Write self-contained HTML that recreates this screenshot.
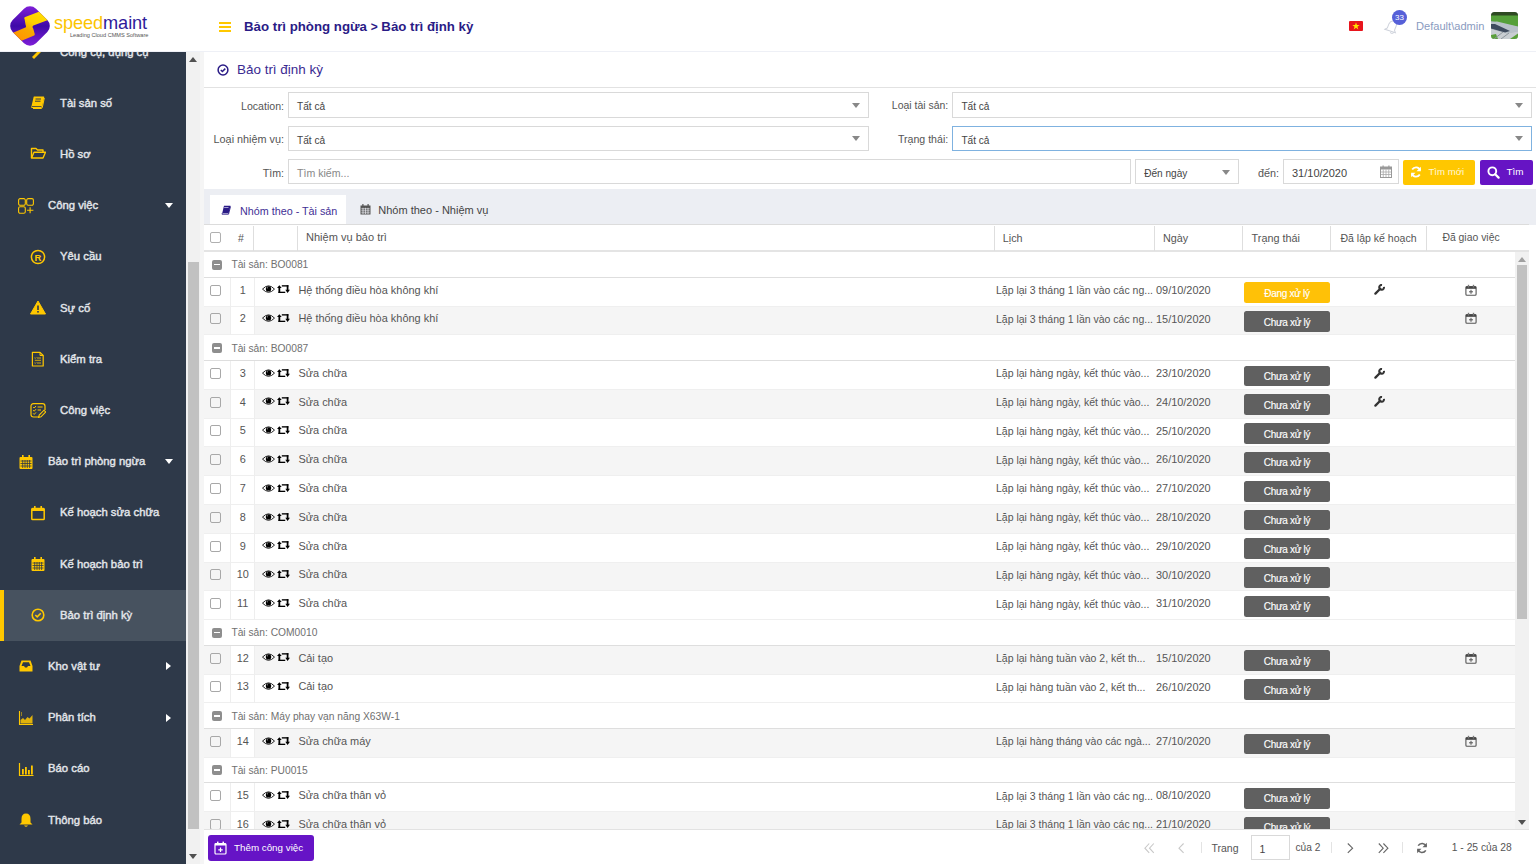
<!DOCTYPE html>
<html><head><meta charset="utf-8"><title>Bảo trì định kỳ</title>
<style>
*{box-sizing:border-box;margin:0;padding:0}
html,body{width:1536px;height:864px;overflow:hidden}
body{position:relative;font-family:"Liberation Sans", sans-serif;background:#fff}
.a{position:absolute}
.t{position:absolute;white-space:nowrap;line-height:1}
</style></head><body>
<div class="a" style="left:0;top:0;width:1536px;height:52px;background:#fff;border-bottom:1px solid #eef0f6"></div>
<svg class="a" style="left:9.5px;top:6px" width="40" height="40" viewBox="0 0 40 40">
<defs>
<linearGradient id="pg" x1="0" y1="0" x2="1" y2="1"><stop offset="0" stop-color="#8a22e0"/><stop offset="0.5" stop-color="#3e0aa8"/><stop offset="1" stop-color="#8a22e0"/></linearGradient>
<linearGradient id="yg" x1="0.85" y1="0.1" x2="0.25" y2="0.95"><stop offset="0" stop-color="#ffe000"/><stop offset="0.4" stop-color="#ffd000"/><stop offset="0.6" stop-color="#f8a800"/><stop offset="0.85" stop-color="#ff9800"/><stop offset="1" stop-color="#f06a10"/></linearGradient>
<clipPath id="dc"><rect x="3.5" y="3.5" width="33" height="33" rx="8.5" transform="rotate(45 20 20)"/></clipPath>
</defs>
<rect x="3.5" y="3.5" width="33" height="33" rx="8.5" transform="rotate(45 20 20)" fill="url(#pg)"/>
<g clip-path="url(#dc)"><path d="M14.6 13.2 Q13.6 11.6 15.2 11.0 L42 0.6 L42 12.5 L23.4 19.6 Q21.8 20.6 23.2 22.4 L24.6 27.6 Q25.2 29.2 23.6 29.8 L-2 40.4 L-2 28.9 L15.4 21.5 Q16.6 20.8 15.6 19.0 Z" fill="url(#yg)"/></g>
</svg>
<div class="t" style="left:54px;top:13px;font-size:18.2px;letter-spacing:-0.1px;line-height:20px"><span style="color:#fcc400">speed</span><span style="color:#2e1a9a">maint</span></div>
<div class="t" style="left:70px;top:32px;font-size:5.6px;color:#555;line-height:6px">Leading Cloud CMMS Software</div>
<div class="a" style="left:219.00px;top:21.50px;width:12.00px;height:2.00px;background:#ffc800"></div>
<div class="a" style="left:219.00px;top:25.50px;width:12.00px;height:2.00px;background:#ffc800"></div>
<div class="a" style="left:219.00px;top:29.50px;width:12.00px;height:2.00px;background:#ffc800"></div>
<div class="t" style="left:244.00px;top:19.78px;font-size:13.25px;color:#2a1b86;font-weight:bold;">Bảo trì phòng ngừa <span style="font-size:12px">&gt;</span> Bảo trì định kỳ</div>
<div class="a" style="left:1349px;top:21px;width:14px;height:10px;background:#e8141c;border-radius:1px"></div>
<svg class="a" style="left:1352px;top:22px" width="8" height="8" viewBox="0 0 10 10"><polygon points="5,0.5 6.2,3.8 9.6,3.8 6.8,5.9 7.9,9.3 5,7.2 2.1,9.3 3.2,5.9 0.4,3.8 3.8,3.8" fill="#ffe000"/></svg>
<svg class="a" style="left:1383px;top:17px" width="18" height="18" viewBox="0 0 18 18"><path d="M3 14 L5 12 L5.5 7.5 Q6.5 3.5 10 3.8 Q13.5 4.5 13 8.5 L12.5 12.5 L14 14.5 Z" fill="none" stroke="#cfd3dc" stroke-width="1" transform="rotate(15 9 9)"/><path d="M7 15.5 Q9 17.5 11 15.5" fill="none" stroke="#cfd3dc" stroke-width="1"/></svg>
<div class="a" style="left:1392px;top:10px;width:15px;height:15px;border-radius:50%;background:#5660d8"></div>
<div class="t" style="left:1392px;top:12px;width:15px;text-align:center;font-size:8px;line-height:11px;color:#fff">33</div>
<div class="t" style="left:1416.00px;top:20.60px;font-size:11.1px;color:#8a9bc0;font-weight:normal;">Default\admin</div>
<svg class="a" style="left:1491px;top:12px" width="27" height="27" viewBox="0 0 27 27"><defs><clipPath id="av"><rect width="27" height="27" rx="3.5"/></clipPath></defs>
<g clip-path="url(#av)"><rect width="27" height="27" fill="#a8b0b8"/><rect width="27" height="4" fill="#2e4a22"/>
<polygon points="0,3.5 27,3.5 27,15 0,9" fill="#55a03a"/>
<polygon points="0,10 6,9.5 27,14.5 27,19.5 16,21.5 0,16" fill="#b8c1c9"/>
<polygon points="0,12 4,12 19,19 14,20.5 0,16.5" fill="#3d4a5e"/>
<polygon points="0,17 16,21.5 27,19.5 27,27 0,27" fill="#c9ced3"/>
<polygon points="0,23 5,22 7,27 0,27" fill="#5aa03a"/>
<polygon points="19,27 27,21.5 27,27" fill="#5aa03a"/>
<path d="M3 27 L12 20 M10 27 L18 21" stroke="#8d959d" stroke-width="1"/></g></svg>
<div class="a" style="left:0;top:52px;width:186px;height:812px;background:#2e3949;overflow:hidden">
<svg class="a" style="left:30px;top:-8.00px" width="16" height="16" viewBox="0 0 16 16"><path d="M2 13 L9 6 L11 8 L4 15 Z" fill="#ffc800"/><path d="M9 4 L13 1 L15 3 L12 7 Z" fill="#ffc800"/></svg>
<div class="t" style="left:60px;top:-5.37px;font-size:11.3px;color:#e4e7eb;-webkit-text-stroke:0.4px #e4e7eb">Công cụ, dụng cụ</div>
<svg class="a" style="left:30px;top:43.20px" width="16" height="16" viewBox="0 0 16 16"><path d="M4 1.5 H13.5 Q14.5 1.5 14.2 2.5 L12 12 Q11.8 13 10.8 13 H2 Q1 13 1.3 12 L3.5 2.5 Q3.7 1.5 4 1.5Z" fill="#ffc800"/><path d="M5.5 4 H11 M5 6.2 H10.5" stroke="#2e3949" stroke-width="1"/><path d="M2 11.5 H11.5" stroke="#2e3949" stroke-width="0.8"/><path d="M14.3 3 L12.3 12.5 Q12 13.5 11 13.5 H3 " fill="none" stroke="#ffc800" stroke-width="1"/></svg>
<div class="t" style="left:60px;top:45.83px;font-size:11.3px;color:#e4e7eb;-webkit-text-stroke:0.4px #e4e7eb">Tài sản số</div>
<svg class="a" style="left:30px;top:94.40px" width="16" height="16" viewBox="0 0 16 16"><path d="M1.5 12 V2.5 H6 L7.5 4 H13 V6" fill="none" stroke="#ffc800" stroke-width="1.4" stroke-linejoin="round"/><path d="M1.5 12 L4 6.2 H15.5 L13 12 Z" fill="none" stroke="#ffc800" stroke-width="1.4" stroke-linejoin="round"/></svg>
<div class="t" style="left:60px;top:97.03px;font-size:11.3px;color:#e4e7eb;-webkit-text-stroke:0.4px #e4e7eb">Hồ sơ</div>
<svg class="a" style="left:18px;top:145.60px" width="16" height="16" viewBox="0 0 16 16"><rect x="0.6" y="0.6" width="6.7" height="6.7" rx="1.5" fill="none" stroke="#ffc800" stroke-width="1.1"/><rect x="8.7" y="0.6" width="6.7" height="6.7" rx="1.5" fill="none" stroke="#ffc800" stroke-width="1.1"/><rect x="0.6" y="8.8" width="6.7" height="6.4" rx="1.5" fill="none" stroke="#ffc800" stroke-width="1.1"/><path d="M12.1 9.2 V15.3 M9 12.3 H15.4" stroke="#ffc800" stroke-width="1.1"/></svg>
<div class="t" style="left:48px;top:148.23px;font-size:11.3px;color:#e4e7eb;-webkit-text-stroke:0.4px #e4e7eb">Công việc</div>
<svg class="a" style="left:165px;top:151.10px" width="8" height="5" viewBox="0 0 8 5"><polygon points="0,0 8,0 4,5" fill="#fff"/></svg>
<svg class="a" style="left:30px;top:196.80px" width="16" height="16" viewBox="0 0 16 16"><circle cx="8" cy="8" r="6.6" fill="none" stroke="#ffc800" stroke-width="1.5"/><text x="8" y="11.6" font-size="9.5" font-weight="bold" text-anchor="middle" font-family="Liberation Sans" fill="#ffc800">R</text></svg>
<div class="t" style="left:60px;top:199.43px;font-size:11.3px;color:#e4e7eb;-webkit-text-stroke:0.4px #e4e7eb">Yêu cầu</div>
<svg class="a" style="left:30px;top:248.00px" width="16" height="16" viewBox="0 0 16 16"><path d="M8 1 L15.5 14 H0.5 Z" fill="#ffc800" stroke="#ffc800" stroke-width="1" stroke-linejoin="round"/><rect x="7.2" y="5.5" width="1.6" height="4.5" fill="#2e3949"/><rect x="7.2" y="11" width="1.6" height="1.6" fill="#2e3949"/></svg>
<div class="t" style="left:60px;top:250.63px;font-size:11.3px;color:#e4e7eb;-webkit-text-stroke:0.4px #e4e7eb">Sự cố</div>
<svg class="a" style="left:30px;top:299.20px" width="16" height="16" viewBox="0 0 16 16"><path d="M2.4 1.3 H10 L13.2 4.5 V15 H2.4 Z" fill="none" stroke="#ffc800" stroke-width="1.2" stroke-linejoin="round"/><path d="M10 1.3 V4.5 H13.2" fill="none" stroke="#ffc800" stroke-width="1"/><path d="M4.6 6.8 L5.3 7.4 L6.2 6.4 M7 7 H11 M4.8 9.3 H11 M4.6 11.8 L5.3 12.4 L6.2 11.4 M7 12 H11" fill="none" stroke="#ffc800" stroke-width="0.8"/></svg>
<div class="t" style="left:60px;top:301.83px;font-size:11.3px;color:#e4e7eb;-webkit-text-stroke:0.4px #e4e7eb">Kiểm tra</div>
<svg class="a" style="left:30px;top:350.40px" width="16" height="16" viewBox="0 0 16 16"><path d="M9 15 H3.5 Q1 15 1 12.5 V4.2 Q1 1.7 3.5 1.7 H12.5 Q15 1.7 15 4.2 V8" fill="none" stroke="#ffc800" stroke-width="1.2"/><path d="M3.2 5 L4.2 6 L6 4 M3.2 8.2 L4.2 9.2 L6 7.2 M3.2 11.4 L4.2 12.4 L6 10.4" fill="none" stroke="#ffc800" stroke-width="1"/><path d="M7.6 5 H12.6 M7.6 8 H11" stroke="#ffc800" stroke-width="1.1"/><path d="M8.6 15.4 L9.2 13 L14 8.2 L15.8 10 L11 14.8 Z" fill="none" stroke="#ffc800" stroke-width="1.1"/></svg>
<div class="t" style="left:60px;top:353.03px;font-size:11.3px;color:#e4e7eb;-webkit-text-stroke:0.4px #e4e7eb">Công việc</div>
<svg class="a" style="left:18px;top:401.60px" width="16" height="16" viewBox="0 0 16 16"><rect x="1.5" y="3" width="13" height="12" rx="1" fill="#ffc800"/><rect x="4" y="1" width="1.6" height="3" fill="#ffc800"/><rect x="10.4" y="1" width="1.6" height="3" fill="#ffc800"/><path d="M2.5 7 H13.5 M2.5 9.5 H13.5 M2.5 12 H13.5 M4.7 6 V14 M7 6 V14 M9.3 6 V14 M11.6 6 V14" stroke="#2e3949" stroke-width="0.8"/></svg>
<div class="t" style="left:48px;top:404.23px;font-size:11.3px;color:#e4e7eb;-webkit-text-stroke:0.4px #e4e7eb">Bảo trì phòng ngừa</div>
<svg class="a" style="left:165px;top:407.10px" width="8" height="5" viewBox="0 0 8 5"><polygon points="0,0 8,0 4,5" fill="#fff"/></svg>
<svg class="a" style="left:30px;top:452.80px" width="16" height="16" viewBox="0 0 16 16"><rect x="1.8" y="3.5" width="12.4" height="11" rx="0.8" fill="none" stroke="#ffc800" stroke-width="1.5"/><rect x="1.8" y="3.5" width="12.4" height="2.5" fill="#ffc800"/><rect x="4" y="1" width="1.6" height="3.5" fill="#ffc800"/><rect x="10.4" y="1" width="1.6" height="3.5" fill="#ffc800"/></svg>
<div class="t" style="left:60px;top:455.43px;font-size:11.3px;color:#e4e7eb;-webkit-text-stroke:0.4px #e4e7eb">Kế hoạch sửa chữa</div>
<svg class="a" style="left:30px;top:504.00px" width="16" height="16" viewBox="0 0 16 16"><rect x="1.5" y="3" width="13" height="12" rx="1" fill="#ffc800"/><rect x="4" y="1" width="1.6" height="3" fill="#ffc800"/><rect x="10.4" y="1" width="1.6" height="3" fill="#ffc800"/><path d="M2.5 7 H13.5 M2.5 9.5 H13.5 M2.5 12 H13.5 M4.7 6 V14 M7 6 V14 M9.3 6 V14 M11.6 6 V14" stroke="#2e3949" stroke-width="0.8"/></svg>
<div class="t" style="left:60px;top:506.63px;font-size:11.3px;color:#e4e7eb;-webkit-text-stroke:0.4px #e4e7eb">Kế hoạch bảo trì</div>
<div class="a" style="left:0;top:537.60px;width:186px;height:51.2px;background:#47525f"></div>
<div class="a" style="left:0;top:537.60px;width:4px;height:51.2px;background:#ffc800"></div>
<svg class="a" style="left:30px;top:555.20px" width="16" height="16" viewBox="0 0 16 16"><circle cx="8" cy="8" r="5.8" fill="none" stroke="#ffc800" stroke-width="1.6"/><path d="M5.3 8 L7.2 9.8 L10.8 6.2" fill="none" stroke="#ffc800" stroke-width="1.6"/></svg>
<div class="t" style="left:60px;top:557.83px;font-size:11.3px;color:#e4e7eb;-webkit-text-stroke:0.4px #e4e7eb">Bảo trì định kỳ</div>
<svg class="a" style="left:18px;top:606.40px" width="16" height="16" viewBox="0 0 16 16"><path d="M1.5 8 L3.5 2.5 H12.5 L14.5 8 V13.5 H1.5 Z" fill="#ffc800"/><path d="M3.5 8 L5 4.2 H11 L12.5 8 H10 L9 9.6 H7 L6 8 Z" fill="#2e3949"/></svg>
<div class="t" style="left:48px;top:609.03px;font-size:11.3px;color:#e4e7eb;-webkit-text-stroke:0.4px #e4e7eb">Kho vật tư</div>
<svg class="a" style="left:166px;top:610.40px" width="5" height="8" viewBox="0 0 5 8"><polygon points="0,0 5,4 0,8" fill="#fff"/></svg>
<svg class="a" style="left:18px;top:657.60px" width="16" height="16" viewBox="0 0 16 16"><path d="M1.5 1 V14.5 H15" fill="none" stroke="#ffc800" stroke-width="1.1"/><path d="M2.5 13.5 V10 L5 8 L7 10 L9.5 7 L11.5 8.5 L14.5 5 V13.5 Z" fill="#ffc800" opacity="0.85"/><path d="M3 3 H4 M3 5 H4" stroke="#ffc800"/></svg>
<div class="t" style="left:48px;top:660.23px;font-size:11.3px;color:#e4e7eb;-webkit-text-stroke:0.4px #e4e7eb">Phân tích</div>
<svg class="a" style="left:166px;top:661.60px" width="5" height="8" viewBox="0 0 5 8"><polygon points="0,0 5,4 0,8" fill="#fff"/></svg>
<svg class="a" style="left:18px;top:708.80px" width="16" height="16" viewBox="0 0 16 16"><path d="M1.5 2 V14.5 H15.5" fill="none" stroke="#ffc800" stroke-width="1.2"/><rect x="4" y="8" width="1.8" height="5.5" fill="#ffc800"/><rect x="7" y="6" width="1.8" height="7.5" fill="#ffc800"/><rect x="10" y="9" width="1.8" height="4.5" fill="#ffc800"/><rect x="13" y="4.5" width="1.8" height="9" fill="#ffc800"/></svg>
<div class="t" style="left:48px;top:711.43px;font-size:11.3px;color:#e4e7eb;-webkit-text-stroke:0.4px #e4e7eb">Báo cáo</div>
<svg class="a" style="left:18px;top:760.00px" width="16" height="16" viewBox="0 0 16 16"><path d="M8 1.5 Q12.5 1.5 12.5 7 V10.5 L14.5 12.5 H1.5 L3.5 10.5 V7 Q3.5 1.5 8 1.5Z" fill="#ffc800"/><path d="M6 13.5 Q8 16 10 13.5 Z" fill="#ffc800"/></svg>
<div class="t" style="left:48px;top:762.63px;font-size:11.3px;color:#e4e7eb;-webkit-text-stroke:0.4px #e4e7eb">Thông báo</div>
</div>
<div class="a" style="left:186.00px;top:52.00px;width:14.00px;height:812.00px;background:#f1f1f1"></div>
<div class="a" style="left:188.00px;top:262.00px;width:10.50px;height:567.00px;background:#c1c1c1"></div>
<svg class="a" style="left:189px;top:57px" width="8" height="5" viewBox="0 0 8 5"><polygon points="0,5 8,5 4,0" fill="#505050"/></svg>
<svg class="a" style="left:189px;top:854px" width="8" height="5" viewBox="0 0 8 5"><polygon points="0,0 8,0 4,5" fill="#505050"/></svg>
<div class="a" style="left:200.00px;top:52.00px;width:4.00px;height:812.00px;background:#f5f5f5"></div>
<svg class="a" style="left:217px;top:63.5px" width="12" height="12" viewBox="0 0 12 12"><circle cx="6" cy="6" r="4.9" fill="none" stroke="#2a1b86" stroke-width="1.5"/><path d="M3.8 6 L5.4 7.5 L8.3 4.6" fill="none" stroke="#2a1b86" stroke-width="1.5"/></svg>
<div class="t" style="left:237.00px;top:63.41px;font-size:13.45px;color:#3a2a92;font-weight:normal;">Bảo trì định kỳ</div>
<div class="a" style="left:204.00px;top:87.00px;width:1332.00px;height:1.00px;background:#e2e2e2"></div>
<div class="t" style="right:1252.00px;top:100.63px;font-size:10.6px;color:#555">Location:</div>
<div class="a" style="left:288.00px;top:92.40px;width:580.50px;height:25.20px;border:1px solid #d9d9d9;background:#fff"></div>
<div class="t" style="left:297.00px;top:102.05px;font-size:10.1px;color:#444;font-weight:normal;">Tất cả</div>
<svg class="a" style="left:851.5px;top:102.8px" width="8" height="5" viewBox="0 0 8 5"><polygon points="0,0 8,0 4,5" fill="#888"/></svg>
<div class="t" style="right:587.80px;top:100.75px;font-size:10.46px;color:#555">Loại tài sản:</div>
<div class="a" style="left:952.40px;top:92.40px;width:580.00px;height:25.20px;border:1px solid #d9d9d9;background:#fff"></div>
<div class="t" style="left:961.40px;top:102.05px;font-size:10.1px;color:#444;font-weight:normal;">Tất cả</div>
<svg class="a" style="left:1515.4px;top:102.8px" width="8" height="5" viewBox="0 0 8 5"><polygon points="0,0 8,0 4,5" fill="#888"/></svg>
<div class="t" style="right:1252.00px;top:134.02px;font-size:10.84px;color:#555">Loại nhiệm vụ:</div>
<div class="a" style="left:288.00px;top:126.00px;width:580.50px;height:25.20px;border:1px solid #d9d9d9;background:#fff"></div>
<div class="t" style="left:297.00px;top:135.65px;font-size:10.1px;color:#444;font-weight:normal;">Tất cả</div>
<svg class="a" style="left:851.5px;top:136.4px" width="8" height="5" viewBox="0 0 8 5"><polygon points="0,0 8,0 4,5" fill="#888"/></svg>
<div class="t" style="right:587.80px;top:134.23px;font-size:10.6px;color:#555">Trạng thái:</div>
<div class="a" style="left:952.40px;top:126.00px;width:580.00px;height:25.20px;border:1px solid #7fb2e0;background:#fff"></div>
<div class="t" style="left:961.40px;top:135.65px;font-size:10.1px;color:#444;font-weight:normal;">Tất cả</div>
<svg class="a" style="left:1515.4px;top:136.4px" width="8" height="5" viewBox="0 0 8 5"><polygon points="0,0 8,0 4,5" fill="#888"/></svg>
<div class="t" style="right:1252.00px;top:167.83px;font-size:10.6px;color:#555">Tìm:</div>
<div class="a" style="left:288.00px;top:159.30px;width:843.00px;height:25.20px;border:1px solid #d9d9d9;background:#fff"></div>
<div class="t" style="left:297.00px;top:168.13px;font-size:10.6px;color:#888;font-weight:normal;">Tìm kiếm...</div>
<div class="a" style="left:1135.20px;top:159.30px;width:104.00px;height:25.20px;border:1px solid #d9d9d9;background:#fff"></div>
<div class="t" style="left:1144.20px;top:168.95px;font-size:10.1px;color:#444;font-weight:normal;">Đến ngày</div>
<svg class="a" style="left:1221.5px;top:169.7px" width="8" height="5" viewBox="0 0 8 5"><polygon points="0,0 8,0 4,5" fill="#888"/></svg>
<div class="t" style="right:257.00px;top:167.66px;font-size:10.8px;color:#555">đến:</div>
<div class="a" style="left:1283.20px;top:159.30px;width:115.50px;height:25.20px;border:1px solid #d9d9d9;background:#fff"></div>
<div class="t" style="left:1292.00px;top:167.79px;font-size:11px;color:#444;font-weight:normal;">31/10/2020</div>
<svg class="a" style="left:1379.5px;top:165px" width="12" height="13" viewBox="0 0 12 13"><rect x="0.5" y="2" width="11" height="10.5" fill="none" stroke="#999" stroke-width="1"/><rect x="0.5" y="2" width="11" height="2.5" fill="#999"/><path d="M1 7 H11 M1 9.5 H11 M3.25 4.5 V12 M6 4.5 V12 M8.75 4.5 V12" stroke="#aaa" stroke-width="0.8"/><rect x="2.5" y="0.5" width="1.2" height="2.5" fill="#999"/><rect x="8.3" y="0.5" width="1.2" height="2.5" fill="#999"/></svg>
<div class="a" style="left:1403.00px;top:159.50px;width:72.00px;height:25.00px;background:#ffc700;border-radius:2px"></div>
<svg class="a" style="left:1410px;top:166px" width="12" height="12" viewBox="0 0 12 12"><path d="M10.3 4.2 A4.6 4.6 0 0 0 2.2 3.6" fill="none" stroke="#fff" stroke-width="1.8"/><polygon points="10.9,0.8 10.9,5.2 6.5,5.2" fill="#fff"/><path d="M1.7 7.8 A4.6 4.6 0 0 0 9.8 8.4" fill="none" stroke="#fff" stroke-width="1.8"/><polygon points="1.1,11.2 1.1,6.8 5.5,6.8" fill="#fff"/></svg>
<div class="t" style="left:1428.50px;top:167.47px;font-size:9.6px;color:#fff8d8;font-weight:normal;">Tìm mới</div>
<div class="a" style="left:1480.00px;top:159.50px;width:52.50px;height:25.00px;background:#6614c4;border-radius:2px"></div>
<svg class="a" style="left:1486.5px;top:166px" width="13" height="13" viewBox="0 0 13 13"><circle cx="5.3" cy="5.3" r="3.9" fill="none" stroke="#fff" stroke-width="1.9"/><path d="M8.2 8.2 L11.6 11.6" stroke="#fff" stroke-width="2.2" stroke-linecap="round"/></svg>
<div class="t" style="left:1506.50px;top:167.22px;font-size:9.9px;color:#fff;font-weight:normal;">Tìm</div>
<div class="a" style="left:204.00px;top:189.00px;width:1332.00px;height:36.00px;background:#eceef3"></div>
<div class="a" style="left:210.40px;top:195.40px;width:135.40px;height:30.00px;background:#fff"></div>
<svg class="a" style="left:221px;top:205px" width="10" height="10" viewBox="0 0 10 10"><path d="M3 0.8 H9.5 L7.6 8.2 H1.2 Z" fill="#2a1b86"/><path d="M1.2 8.2 L1 9.2 H7.5 L9.5 1.5" fill="none" stroke="#2a1b86" stroke-width="0.9"/><path d="M3.2 2.5 H7.5" stroke="#c8c4e8" stroke-width="0.8"/></svg>
<div class="t" style="left:240.00px;top:205.67px;font-size:10.78px;color:#3f2f95;font-weight:normal;">Nhóm theo - Tài sản</div>
<svg class="a" style="left:360px;top:204px" width="11" height="11" viewBox="0 0 11 11"><rect x="0.5" y="1.5" width="10" height="9" fill="#555"/><rect x="2.3" y="0" width="1.2" height="2.5" fill="#555"/><rect x="7.5" y="0" width="1.2" height="2.5" fill="#555"/><path d="M1.3 4.8 H9.7 M1.3 6.8 H9.7 M1.3 8.8 H9.7 M3 3.8 V10 M5.5 3.8 V10 M8 3.8 V10" stroke="#eceef3" stroke-width="0.7"/></svg>
<div class="t" style="left:378.30px;top:205.49px;font-size:11px;color:#444;font-weight:normal;">Nhóm theo - Nhiệm vụ</div>
<div class="a" style="left:204.00px;top:224.00px;width:1325.00px;height:28.00px;background:#fff;border-top:1px solid #dcdcdc;border-bottom:2px solid #e4e4e4"></div>
<div class="a" style="left:252.90px;top:225.60px;width:1.00px;height:25.00px;background:#dedede"></div>
<div class="a" style="left:296.90px;top:225.60px;width:1.00px;height:25.00px;background:#dedede"></div>
<div class="a" style="left:994.10px;top:225.60px;width:1.00px;height:25.00px;background:#dedede"></div>
<div class="a" style="left:1153.90px;top:225.60px;width:1.00px;height:25.00px;background:#dedede"></div>
<div class="a" style="left:1242.00px;top:225.60px;width:1.00px;height:25.00px;background:#dedede"></div>
<div class="a" style="left:1330.20px;top:225.60px;width:1.00px;height:25.00px;background:#dedede"></div>
<div class="a" style="left:1425.90px;top:225.60px;width:1.00px;height:25.00px;background:#dedede"></div>
<div class="a" style="left:210.00px;top:232.40px;width:11.00px;height:11.00px;border:1px solid #b0b0b0;border-radius:2px;background:#fff"></div>
<div class="t" style="left:238.00px;top:232.81px;font-size:10.5px;color:#555;font-weight:normal;">#</div>
<div class="t" style="left:306.00px;top:232.35px;font-size:11.04px;color:#555;font-weight:normal;">Nhiệm vụ bảo trì</div>
<div class="t" style="left:1002.80px;top:232.56px;font-size:10.8px;color:#555;font-weight:normal;">Lịch</div>
<div class="t" style="left:1163.00px;top:232.56px;font-size:10.8px;color:#555;font-weight:normal;">Ngày</div>
<div class="t" style="left:1251.60px;top:232.52px;font-size:10.84px;color:#555;font-weight:normal;">Trạng thái</div>
<div class="t" style="left:1340.50px;top:232.79px;font-size:10.52px;color:#555;font-weight:normal;">Đã lập kế hoạch</div>
<div class="t" style="left:1442.40px;top:232.89px;font-size:10.41px;color:#555;font-weight:normal;">Đã giao việc</div>
<div class="a" style="left:204px;top:252.3px;width:1311.4px;height:577.5px;overflow:hidden;background:#fff">
<div class="a" style="left:0.00px;top:0.00px;width:1311.40px;height:25.60px;background:#fff;border-bottom:1px solid #dedede"></div>
<div class="a" style="left:7.8px;top:7.40px;width:10px;height:10px;border-radius:2px;background:#8e8e8e"></div>
<div class="a" style="left:9.80px;top:11.60px;width:6.00px;height:1.60px;background:#fff"></div>
<div class="t" style="left:27.4px;top:8.11px;font-size:10.26px;color:#707070">Tài sản: BO0081</div>
<div class="a" style="left:0.00px;top:25.60px;width:1311.40px;height:28.80px;background:#fff;border-bottom:1px solid #efefef"></div>
<div class="a" style="left:26.40px;top:25.60px;width:24.60px;height:28.80px;background:#fff;border-left:1px solid #eeeeee;border-right:1px solid #eeeeee;border-bottom:1px solid #efefef"></div>
<div class="a" style="left:6.00px;top:32.30px;width:11.00px;height:11.00px;border:1px solid #a8a8a8;border-radius:2px;background:transparent"></div>
<div class="t" style="left:26.4px;width:24.6px;text-align:center;top:32.37px;font-size:10.9px;color:#555">1</div>
<svg class="a" style="left:58.2px;top:33.10px" width="13" height="8.2" viewBox="0 0 13 8.2"><path d="M0.5 4.1 Q6.5 -2.4 12.5 4.1 Q6.5 10.6 0.5 4.1 Z" fill="none" stroke="#222" stroke-width="1"/><circle cx="6.5" cy="3.9" r="2.7" fill="#000"/><path d="M5 3.3 L6 2.4" stroke="#bbb" stroke-width="0.8"/></svg>
<svg class="a" style="left:72.6px;top:33.10px" width="13" height="8" viewBox="0 0 13 8"><polygon points="0,3 2.35,0.2 4.7,3" fill="#000"/><rect x="1.45" y="2.8" width="1.8" height="5.2" fill="#000"/><rect x="1.45" y="6.7" width="6.8" height="1.3" fill="#000"/><rect x="4.8" y="0.2" width="6.6" height="1.35" fill="#000"/><rect x="9.7" y="0.2" width="1.75" height="5" fill="#000"/><polygon points="8.3,4.8 12.9,4.8 10.6,8" fill="#000"/></svg>
<div class="t" style="left:94.4px;top:32.33px;font-size:10.95px;color:#555">Hệ thống điều hòa không khí</div>
<div class="t" style="left:792px;top:32.71px;font-size:10.5px;color:#555">Lặp lại 3 tháng 1 lần vào các ng...</div>
<div class="t" style="left:952px;top:32.56px;font-size:10.91px;color:#555">09/10/2020</div>
<div class="a" style="left:1040.00px;top:30.20px;width:86.00px;height:20.80px;background:#ffc107;border-radius:2.5px"></div>
<div class="t" style="left:1040px;width:86px;text-align:center;top:36.53px;font-size:10px;color:#fff;letter-spacing:-0.3px;-webkit-text-stroke:0.15px #fff">Đang xử lý</div>
<svg class="a" style="left:1169.9px;top:32.20px" width="11" height="11" viewBox="0 0 11 11"><path d="M1.4 9.6 L6.2 4.8" stroke="#333" stroke-width="2.3" stroke-linecap="round"/><path d="M9.96 2.88 A2.4 2.4 0 1 1 8.02 0.94" fill="none" stroke="#333" stroke-width="2"/></svg>
<svg class="a" style="left:1261px;top:31.40px" width="12" height="12" viewBox="0 0 12 12"><rect x="0.9" y="2.6" width="10.2" height="8.6" rx="1" fill="none" stroke="#555" stroke-width="1.1"/><rect x="0.9" y="2.6" width="10.2" height="2.2" fill="#444"/><rect x="2.8" y="0.8" width="1.4" height="2.8" fill="#777"/><rect x="7.8" y="0.8" width="1.4" height="2.8" fill="#777"/><path d="M6 5.8 V9.8 M4 7.8 H8" stroke="#555" stroke-width="1"/></svg>
<div class="a" style="left:0.00px;top:54.40px;width:1311.40px;height:28.80px;background:#f5f5f5;border-bottom:1px solid #efefef"></div>
<div class="a" style="left:26.40px;top:54.40px;width:24.60px;height:28.80px;background:#fff;border-left:1px solid #eeeeee;border-right:1px solid #eeeeee;border-bottom:1px solid #efefef"></div>
<div class="a" style="left:6.00px;top:61.10px;width:11.00px;height:11.00px;border:1px solid #a8a8a8;border-radius:2px;background:transparent"></div>
<div class="t" style="left:26.4px;width:24.6px;text-align:center;top:61.17px;font-size:10.9px;color:#555">2</div>
<svg class="a" style="left:58.2px;top:61.90px" width="13" height="8.2" viewBox="0 0 13 8.2"><path d="M0.5 4.1 Q6.5 -2.4 12.5 4.1 Q6.5 10.6 0.5 4.1 Z" fill="none" stroke="#222" stroke-width="1"/><circle cx="6.5" cy="3.9" r="2.7" fill="#000"/><path d="M5 3.3 L6 2.4" stroke="#bbb" stroke-width="0.8"/></svg>
<svg class="a" style="left:72.6px;top:61.90px" width="13" height="8" viewBox="0 0 13 8"><polygon points="0,3 2.35,0.2 4.7,3" fill="#000"/><rect x="1.45" y="2.8" width="1.8" height="5.2" fill="#000"/><rect x="1.45" y="6.7" width="6.8" height="1.3" fill="#000"/><rect x="4.8" y="0.2" width="6.6" height="1.35" fill="#000"/><rect x="9.7" y="0.2" width="1.75" height="5" fill="#000"/><polygon points="8.3,4.8 12.9,4.8 10.6,8" fill="#000"/></svg>
<div class="t" style="left:94.4px;top:61.13px;font-size:10.95px;color:#555">Hệ thống điều hòa không khí</div>
<div class="t" style="left:792px;top:61.51px;font-size:10.5px;color:#555">Lặp lại 3 tháng 1 lần vào các ng...</div>
<div class="t" style="left:952px;top:61.36px;font-size:10.91px;color:#555">15/10/2020</div>
<div class="a" style="left:1040.00px;top:59.00px;width:86.00px;height:20.80px;background:#606060;border-radius:2.5px"></div>
<div class="t" style="left:1040px;width:86px;text-align:center;top:65.34px;font-size:10px;color:#fff;letter-spacing:-0.3px;-webkit-text-stroke:0.15px #fff">Chưa xử lý</div>
<svg class="a" style="left:1261px;top:60.20px" width="12" height="12" viewBox="0 0 12 12"><rect x="0.9" y="2.6" width="10.2" height="8.6" rx="1" fill="none" stroke="#555" stroke-width="1.1"/><rect x="0.9" y="2.6" width="10.2" height="2.2" fill="#444"/><rect x="2.8" y="0.8" width="1.4" height="2.8" fill="#777"/><rect x="7.8" y="0.8" width="1.4" height="2.8" fill="#777"/><path d="M6 5.8 V9.8 M4 7.8 H8" stroke="#555" stroke-width="1"/></svg>
<div class="a" style="left:0.00px;top:83.20px;width:1311.40px;height:25.60px;background:#fff;border-bottom:1px solid #dedede"></div>
<div class="a" style="left:7.8px;top:90.60px;width:10px;height:10px;border-radius:2px;background:#8e8e8e"></div>
<div class="a" style="left:9.80px;top:94.80px;width:6.00px;height:1.60px;background:#fff"></div>
<div class="t" style="left:27.4px;top:91.31px;font-size:10.26px;color:#707070">Tài sản: BO0087</div>
<div class="a" style="left:0.00px;top:108.80px;width:1311.40px;height:28.80px;background:#fff;border-bottom:1px solid #efefef"></div>
<div class="a" style="left:26.40px;top:108.80px;width:24.60px;height:28.80px;background:#fff;border-left:1px solid #eeeeee;border-right:1px solid #eeeeee;border-bottom:1px solid #efefef"></div>
<div class="a" style="left:6.00px;top:115.50px;width:11.00px;height:11.00px;border:1px solid #a8a8a8;border-radius:2px;background:transparent"></div>
<div class="t" style="left:26.4px;width:24.6px;text-align:center;top:115.57px;font-size:10.9px;color:#555">3</div>
<svg class="a" style="left:58.2px;top:116.30px" width="13" height="8.2" viewBox="0 0 13 8.2"><path d="M0.5 4.1 Q6.5 -2.4 12.5 4.1 Q6.5 10.6 0.5 4.1 Z" fill="none" stroke="#222" stroke-width="1"/><circle cx="6.5" cy="3.9" r="2.7" fill="#000"/><path d="M5 3.3 L6 2.4" stroke="#bbb" stroke-width="0.8"/></svg>
<svg class="a" style="left:72.6px;top:116.30px" width="13" height="8" viewBox="0 0 13 8"><polygon points="0,3 2.35,0.2 4.7,3" fill="#000"/><rect x="1.45" y="2.8" width="1.8" height="5.2" fill="#000"/><rect x="1.45" y="6.7" width="6.8" height="1.3" fill="#000"/><rect x="4.8" y="0.2" width="6.6" height="1.35" fill="#000"/><rect x="9.7" y="0.2" width="1.75" height="5" fill="#000"/><polygon points="8.3,4.8 12.9,4.8 10.6,8" fill="#000"/></svg>
<div class="t" style="left:94.4px;top:115.53px;font-size:10.95px;color:#555">Sửa chữa</div>
<div class="t" style="left:792px;top:115.91px;font-size:10.5px;color:#555">Lặp lại hàng ngày, kết thúc vào...</div>
<div class="t" style="left:952px;top:115.76px;font-size:10.91px;color:#555">23/10/2020</div>
<div class="a" style="left:1040.00px;top:113.40px;width:86.00px;height:20.80px;background:#606060;border-radius:2.5px"></div>
<div class="t" style="left:1040px;width:86px;text-align:center;top:119.74px;font-size:10px;color:#fff;letter-spacing:-0.3px;-webkit-text-stroke:0.15px #fff">Chưa xử lý</div>
<svg class="a" style="left:1169.9px;top:115.40px" width="11" height="11" viewBox="0 0 11 11"><path d="M1.4 9.6 L6.2 4.8" stroke="#333" stroke-width="2.3" stroke-linecap="round"/><path d="M9.96 2.88 A2.4 2.4 0 1 1 8.02 0.94" fill="none" stroke="#333" stroke-width="2"/></svg>
<div class="a" style="left:0.00px;top:137.60px;width:1311.40px;height:28.80px;background:#f5f5f5;border-bottom:1px solid #efefef"></div>
<div class="a" style="left:26.40px;top:137.60px;width:24.60px;height:28.80px;background:#fff;border-left:1px solid #eeeeee;border-right:1px solid #eeeeee;border-bottom:1px solid #efefef"></div>
<div class="a" style="left:6.00px;top:144.30px;width:11.00px;height:11.00px;border:1px solid #a8a8a8;border-radius:2px;background:transparent"></div>
<div class="t" style="left:26.4px;width:24.6px;text-align:center;top:144.37px;font-size:10.9px;color:#555">4</div>
<svg class="a" style="left:58.2px;top:145.10px" width="13" height="8.2" viewBox="0 0 13 8.2"><path d="M0.5 4.1 Q6.5 -2.4 12.5 4.1 Q6.5 10.6 0.5 4.1 Z" fill="none" stroke="#222" stroke-width="1"/><circle cx="6.5" cy="3.9" r="2.7" fill="#000"/><path d="M5 3.3 L6 2.4" stroke="#bbb" stroke-width="0.8"/></svg>
<svg class="a" style="left:72.6px;top:145.10px" width="13" height="8" viewBox="0 0 13 8"><polygon points="0,3 2.35,0.2 4.7,3" fill="#000"/><rect x="1.45" y="2.8" width="1.8" height="5.2" fill="#000"/><rect x="1.45" y="6.7" width="6.8" height="1.3" fill="#000"/><rect x="4.8" y="0.2" width="6.6" height="1.35" fill="#000"/><rect x="9.7" y="0.2" width="1.75" height="5" fill="#000"/><polygon points="8.3,4.8 12.9,4.8 10.6,8" fill="#000"/></svg>
<div class="t" style="left:94.4px;top:144.33px;font-size:10.95px;color:#555">Sửa chữa</div>
<div class="t" style="left:792px;top:144.71px;font-size:10.5px;color:#555">Lặp lại hàng ngày, kết thúc vào...</div>
<div class="t" style="left:952px;top:144.56px;font-size:10.91px;color:#555">24/10/2020</div>
<div class="a" style="left:1040.00px;top:142.20px;width:86.00px;height:20.80px;background:#606060;border-radius:2.5px"></div>
<div class="t" style="left:1040px;width:86px;text-align:center;top:148.54px;font-size:10px;color:#fff;letter-spacing:-0.3px;-webkit-text-stroke:0.15px #fff">Chưa xử lý</div>
<svg class="a" style="left:1169.9px;top:144.20px" width="11" height="11" viewBox="0 0 11 11"><path d="M1.4 9.6 L6.2 4.8" stroke="#333" stroke-width="2.3" stroke-linecap="round"/><path d="M9.96 2.88 A2.4 2.4 0 1 1 8.02 0.94" fill="none" stroke="#333" stroke-width="2"/></svg>
<div class="a" style="left:0.00px;top:166.40px;width:1311.40px;height:28.80px;background:#fff;border-bottom:1px solid #efefef"></div>
<div class="a" style="left:26.40px;top:166.40px;width:24.60px;height:28.80px;background:#fff;border-left:1px solid #eeeeee;border-right:1px solid #eeeeee;border-bottom:1px solid #efefef"></div>
<div class="a" style="left:6.00px;top:173.10px;width:11.00px;height:11.00px;border:1px solid #a8a8a8;border-radius:2px;background:transparent"></div>
<div class="t" style="left:26.4px;width:24.6px;text-align:center;top:173.17px;font-size:10.9px;color:#555">5</div>
<svg class="a" style="left:58.2px;top:173.90px" width="13" height="8.2" viewBox="0 0 13 8.2"><path d="M0.5 4.1 Q6.5 -2.4 12.5 4.1 Q6.5 10.6 0.5 4.1 Z" fill="none" stroke="#222" stroke-width="1"/><circle cx="6.5" cy="3.9" r="2.7" fill="#000"/><path d="M5 3.3 L6 2.4" stroke="#bbb" stroke-width="0.8"/></svg>
<svg class="a" style="left:72.6px;top:173.90px" width="13" height="8" viewBox="0 0 13 8"><polygon points="0,3 2.35,0.2 4.7,3" fill="#000"/><rect x="1.45" y="2.8" width="1.8" height="5.2" fill="#000"/><rect x="1.45" y="6.7" width="6.8" height="1.3" fill="#000"/><rect x="4.8" y="0.2" width="6.6" height="1.35" fill="#000"/><rect x="9.7" y="0.2" width="1.75" height="5" fill="#000"/><polygon points="8.3,4.8 12.9,4.8 10.6,8" fill="#000"/></svg>
<div class="t" style="left:94.4px;top:173.13px;font-size:10.95px;color:#555">Sửa chữa</div>
<div class="t" style="left:792px;top:173.51px;font-size:10.5px;color:#555">Lặp lại hàng ngày, kết thúc vào...</div>
<div class="t" style="left:952px;top:173.36px;font-size:10.91px;color:#555">25/10/2020</div>
<div class="a" style="left:1040.00px;top:171.00px;width:86.00px;height:20.80px;background:#606060;border-radius:2.5px"></div>
<div class="t" style="left:1040px;width:86px;text-align:center;top:177.34px;font-size:10px;color:#fff;letter-spacing:-0.3px;-webkit-text-stroke:0.15px #fff">Chưa xử lý</div>
<div class="a" style="left:0.00px;top:195.20px;width:1311.40px;height:28.80px;background:#f5f5f5;border-bottom:1px solid #efefef"></div>
<div class="a" style="left:26.40px;top:195.20px;width:24.60px;height:28.80px;background:#fff;border-left:1px solid #eeeeee;border-right:1px solid #eeeeee;border-bottom:1px solid #efefef"></div>
<div class="a" style="left:6.00px;top:201.90px;width:11.00px;height:11.00px;border:1px solid #a8a8a8;border-radius:2px;background:transparent"></div>
<div class="t" style="left:26.4px;width:24.6px;text-align:center;top:201.97px;font-size:10.9px;color:#555">6</div>
<svg class="a" style="left:58.2px;top:202.70px" width="13" height="8.2" viewBox="0 0 13 8.2"><path d="M0.5 4.1 Q6.5 -2.4 12.5 4.1 Q6.5 10.6 0.5 4.1 Z" fill="none" stroke="#222" stroke-width="1"/><circle cx="6.5" cy="3.9" r="2.7" fill="#000"/><path d="M5 3.3 L6 2.4" stroke="#bbb" stroke-width="0.8"/></svg>
<svg class="a" style="left:72.6px;top:202.70px" width="13" height="8" viewBox="0 0 13 8"><polygon points="0,3 2.35,0.2 4.7,3" fill="#000"/><rect x="1.45" y="2.8" width="1.8" height="5.2" fill="#000"/><rect x="1.45" y="6.7" width="6.8" height="1.3" fill="#000"/><rect x="4.8" y="0.2" width="6.6" height="1.35" fill="#000"/><rect x="9.7" y="0.2" width="1.75" height="5" fill="#000"/><polygon points="8.3,4.8 12.9,4.8 10.6,8" fill="#000"/></svg>
<div class="t" style="left:94.4px;top:201.93px;font-size:10.95px;color:#555">Sửa chữa</div>
<div class="t" style="left:792px;top:202.31px;font-size:10.5px;color:#555">Lặp lại hàng ngày, kết thúc vào...</div>
<div class="t" style="left:952px;top:202.16px;font-size:10.91px;color:#555">26/10/2020</div>
<div class="a" style="left:1040.00px;top:199.80px;width:86.00px;height:20.80px;background:#606060;border-radius:2.5px"></div>
<div class="t" style="left:1040px;width:86px;text-align:center;top:206.14px;font-size:10px;color:#fff;letter-spacing:-0.3px;-webkit-text-stroke:0.15px #fff">Chưa xử lý</div>
<div class="a" style="left:0.00px;top:224.00px;width:1311.40px;height:28.80px;background:#fff;border-bottom:1px solid #efefef"></div>
<div class="a" style="left:26.40px;top:224.00px;width:24.60px;height:28.80px;background:#fff;border-left:1px solid #eeeeee;border-right:1px solid #eeeeee;border-bottom:1px solid #efefef"></div>
<div class="a" style="left:6.00px;top:230.70px;width:11.00px;height:11.00px;border:1px solid #a8a8a8;border-radius:2px;background:transparent"></div>
<div class="t" style="left:26.4px;width:24.6px;text-align:center;top:230.77px;font-size:10.9px;color:#555">7</div>
<svg class="a" style="left:58.2px;top:231.50px" width="13" height="8.2" viewBox="0 0 13 8.2"><path d="M0.5 4.1 Q6.5 -2.4 12.5 4.1 Q6.5 10.6 0.5 4.1 Z" fill="none" stroke="#222" stroke-width="1"/><circle cx="6.5" cy="3.9" r="2.7" fill="#000"/><path d="M5 3.3 L6 2.4" stroke="#bbb" stroke-width="0.8"/></svg>
<svg class="a" style="left:72.6px;top:231.50px" width="13" height="8" viewBox="0 0 13 8"><polygon points="0,3 2.35,0.2 4.7,3" fill="#000"/><rect x="1.45" y="2.8" width="1.8" height="5.2" fill="#000"/><rect x="1.45" y="6.7" width="6.8" height="1.3" fill="#000"/><rect x="4.8" y="0.2" width="6.6" height="1.35" fill="#000"/><rect x="9.7" y="0.2" width="1.75" height="5" fill="#000"/><polygon points="8.3,4.8 12.9,4.8 10.6,8" fill="#000"/></svg>
<div class="t" style="left:94.4px;top:230.73px;font-size:10.95px;color:#555">Sửa chữa</div>
<div class="t" style="left:792px;top:231.11px;font-size:10.5px;color:#555">Lặp lại hàng ngày, kết thúc vào...</div>
<div class="t" style="left:952px;top:230.96px;font-size:10.91px;color:#555">27/10/2020</div>
<div class="a" style="left:1040.00px;top:228.60px;width:86.00px;height:20.80px;background:#606060;border-radius:2.5px"></div>
<div class="t" style="left:1040px;width:86px;text-align:center;top:234.94px;font-size:10px;color:#fff;letter-spacing:-0.3px;-webkit-text-stroke:0.15px #fff">Chưa xử lý</div>
<div class="a" style="left:0.00px;top:252.80px;width:1311.40px;height:28.80px;background:#f5f5f5;border-bottom:1px solid #efefef"></div>
<div class="a" style="left:26.40px;top:252.80px;width:24.60px;height:28.80px;background:#fff;border-left:1px solid #eeeeee;border-right:1px solid #eeeeee;border-bottom:1px solid #efefef"></div>
<div class="a" style="left:6.00px;top:259.50px;width:11.00px;height:11.00px;border:1px solid #a8a8a8;border-radius:2px;background:transparent"></div>
<div class="t" style="left:26.4px;width:24.6px;text-align:center;top:259.57px;font-size:10.9px;color:#555">8</div>
<svg class="a" style="left:58.2px;top:260.30px" width="13" height="8.2" viewBox="0 0 13 8.2"><path d="M0.5 4.1 Q6.5 -2.4 12.5 4.1 Q6.5 10.6 0.5 4.1 Z" fill="none" stroke="#222" stroke-width="1"/><circle cx="6.5" cy="3.9" r="2.7" fill="#000"/><path d="M5 3.3 L6 2.4" stroke="#bbb" stroke-width="0.8"/></svg>
<svg class="a" style="left:72.6px;top:260.30px" width="13" height="8" viewBox="0 0 13 8"><polygon points="0,3 2.35,0.2 4.7,3" fill="#000"/><rect x="1.45" y="2.8" width="1.8" height="5.2" fill="#000"/><rect x="1.45" y="6.7" width="6.8" height="1.3" fill="#000"/><rect x="4.8" y="0.2" width="6.6" height="1.35" fill="#000"/><rect x="9.7" y="0.2" width="1.75" height="5" fill="#000"/><polygon points="8.3,4.8 12.9,4.8 10.6,8" fill="#000"/></svg>
<div class="t" style="left:94.4px;top:259.53px;font-size:10.95px;color:#555">Sửa chữa</div>
<div class="t" style="left:792px;top:259.91px;font-size:10.5px;color:#555">Lặp lại hàng ngày, kết thúc vào...</div>
<div class="t" style="left:952px;top:259.76px;font-size:10.91px;color:#555">28/10/2020</div>
<div class="a" style="left:1040.00px;top:257.40px;width:86.00px;height:20.80px;background:#606060;border-radius:2.5px"></div>
<div class="t" style="left:1040px;width:86px;text-align:center;top:263.74px;font-size:10px;color:#fff;letter-spacing:-0.3px;-webkit-text-stroke:0.15px #fff">Chưa xử lý</div>
<div class="a" style="left:0.00px;top:281.60px;width:1311.40px;height:28.80px;background:#fff;border-bottom:1px solid #efefef"></div>
<div class="a" style="left:26.40px;top:281.60px;width:24.60px;height:28.80px;background:#fff;border-left:1px solid #eeeeee;border-right:1px solid #eeeeee;border-bottom:1px solid #efefef"></div>
<div class="a" style="left:6.00px;top:288.30px;width:11.00px;height:11.00px;border:1px solid #a8a8a8;border-radius:2px;background:transparent"></div>
<div class="t" style="left:26.4px;width:24.6px;text-align:center;top:288.37px;font-size:10.9px;color:#555">9</div>
<svg class="a" style="left:58.2px;top:289.10px" width="13" height="8.2" viewBox="0 0 13 8.2"><path d="M0.5 4.1 Q6.5 -2.4 12.5 4.1 Q6.5 10.6 0.5 4.1 Z" fill="none" stroke="#222" stroke-width="1"/><circle cx="6.5" cy="3.9" r="2.7" fill="#000"/><path d="M5 3.3 L6 2.4" stroke="#bbb" stroke-width="0.8"/></svg>
<svg class="a" style="left:72.6px;top:289.10px" width="13" height="8" viewBox="0 0 13 8"><polygon points="0,3 2.35,0.2 4.7,3" fill="#000"/><rect x="1.45" y="2.8" width="1.8" height="5.2" fill="#000"/><rect x="1.45" y="6.7" width="6.8" height="1.3" fill="#000"/><rect x="4.8" y="0.2" width="6.6" height="1.35" fill="#000"/><rect x="9.7" y="0.2" width="1.75" height="5" fill="#000"/><polygon points="8.3,4.8 12.9,4.8 10.6,8" fill="#000"/></svg>
<div class="t" style="left:94.4px;top:288.33px;font-size:10.95px;color:#555">Sửa chữa</div>
<div class="t" style="left:792px;top:288.71px;font-size:10.5px;color:#555">Lặp lại hàng ngày, kết thúc vào...</div>
<div class="t" style="left:952px;top:288.56px;font-size:10.91px;color:#555">29/10/2020</div>
<div class="a" style="left:1040.00px;top:286.20px;width:86.00px;height:20.80px;background:#606060;border-radius:2.5px"></div>
<div class="t" style="left:1040px;width:86px;text-align:center;top:292.54px;font-size:10px;color:#fff;letter-spacing:-0.3px;-webkit-text-stroke:0.15px #fff">Chưa xử lý</div>
<div class="a" style="left:0.00px;top:310.40px;width:1311.40px;height:28.80px;background:#f5f5f5;border-bottom:1px solid #efefef"></div>
<div class="a" style="left:26.40px;top:310.40px;width:24.60px;height:28.80px;background:#fff;border-left:1px solid #eeeeee;border-right:1px solid #eeeeee;border-bottom:1px solid #efefef"></div>
<div class="a" style="left:6.00px;top:317.10px;width:11.00px;height:11.00px;border:1px solid #a8a8a8;border-radius:2px;background:transparent"></div>
<div class="t" style="left:26.4px;width:24.6px;text-align:center;top:317.17px;font-size:10.9px;color:#555">10</div>
<svg class="a" style="left:58.2px;top:317.90px" width="13" height="8.2" viewBox="0 0 13 8.2"><path d="M0.5 4.1 Q6.5 -2.4 12.5 4.1 Q6.5 10.6 0.5 4.1 Z" fill="none" stroke="#222" stroke-width="1"/><circle cx="6.5" cy="3.9" r="2.7" fill="#000"/><path d="M5 3.3 L6 2.4" stroke="#bbb" stroke-width="0.8"/></svg>
<svg class="a" style="left:72.6px;top:317.90px" width="13" height="8" viewBox="0 0 13 8"><polygon points="0,3 2.35,0.2 4.7,3" fill="#000"/><rect x="1.45" y="2.8" width="1.8" height="5.2" fill="#000"/><rect x="1.45" y="6.7" width="6.8" height="1.3" fill="#000"/><rect x="4.8" y="0.2" width="6.6" height="1.35" fill="#000"/><rect x="9.7" y="0.2" width="1.75" height="5" fill="#000"/><polygon points="8.3,4.8 12.9,4.8 10.6,8" fill="#000"/></svg>
<div class="t" style="left:94.4px;top:317.13px;font-size:10.95px;color:#555">Sửa chữa</div>
<div class="t" style="left:792px;top:317.51px;font-size:10.5px;color:#555">Lặp lại hàng ngày, kết thúc vào...</div>
<div class="t" style="left:952px;top:317.36px;font-size:10.91px;color:#555">30/10/2020</div>
<div class="a" style="left:1040.00px;top:315.00px;width:86.00px;height:20.80px;background:#606060;border-radius:2.5px"></div>
<div class="t" style="left:1040px;width:86px;text-align:center;top:321.34px;font-size:10px;color:#fff;letter-spacing:-0.3px;-webkit-text-stroke:0.15px #fff">Chưa xử lý</div>
<div class="a" style="left:0.00px;top:339.20px;width:1311.40px;height:28.80px;background:#fff;border-bottom:1px solid #efefef"></div>
<div class="a" style="left:26.40px;top:339.20px;width:24.60px;height:28.80px;background:#fff;border-left:1px solid #eeeeee;border-right:1px solid #eeeeee;border-bottom:1px solid #efefef"></div>
<div class="a" style="left:6.00px;top:345.90px;width:11.00px;height:11.00px;border:1px solid #a8a8a8;border-radius:2px;background:transparent"></div>
<div class="t" style="left:26.4px;width:24.6px;text-align:center;top:345.97px;font-size:10.9px;color:#555">11</div>
<svg class="a" style="left:58.2px;top:346.70px" width="13" height="8.2" viewBox="0 0 13 8.2"><path d="M0.5 4.1 Q6.5 -2.4 12.5 4.1 Q6.5 10.6 0.5 4.1 Z" fill="none" stroke="#222" stroke-width="1"/><circle cx="6.5" cy="3.9" r="2.7" fill="#000"/><path d="M5 3.3 L6 2.4" stroke="#bbb" stroke-width="0.8"/></svg>
<svg class="a" style="left:72.6px;top:346.70px" width="13" height="8" viewBox="0 0 13 8"><polygon points="0,3 2.35,0.2 4.7,3" fill="#000"/><rect x="1.45" y="2.8" width="1.8" height="5.2" fill="#000"/><rect x="1.45" y="6.7" width="6.8" height="1.3" fill="#000"/><rect x="4.8" y="0.2" width="6.6" height="1.35" fill="#000"/><rect x="9.7" y="0.2" width="1.75" height="5" fill="#000"/><polygon points="8.3,4.8 12.9,4.8 10.6,8" fill="#000"/></svg>
<div class="t" style="left:94.4px;top:345.93px;font-size:10.95px;color:#555">Sửa chữa</div>
<div class="t" style="left:792px;top:346.31px;font-size:10.5px;color:#555">Lặp lại hàng ngày, kết thúc vào...</div>
<div class="t" style="left:952px;top:346.16px;font-size:10.91px;color:#555">31/10/2020</div>
<div class="a" style="left:1040.00px;top:343.80px;width:86.00px;height:20.80px;background:#606060;border-radius:2.5px"></div>
<div class="t" style="left:1040px;width:86px;text-align:center;top:350.14px;font-size:10px;color:#fff;letter-spacing:-0.3px;-webkit-text-stroke:0.15px #fff">Chưa xử lý</div>
<div class="a" style="left:0.00px;top:368.00px;width:1311.40px;height:25.60px;background:#fff;border-bottom:1px solid #dedede"></div>
<div class="a" style="left:7.8px;top:375.40px;width:10px;height:10px;border-radius:2px;background:#8e8e8e"></div>
<div class="a" style="left:9.80px;top:379.60px;width:6.00px;height:1.60px;background:#fff"></div>
<div class="t" style="left:27.4px;top:376.11px;font-size:10.26px;color:#707070">Tài sản: COM0010</div>
<div class="a" style="left:0.00px;top:393.60px;width:1311.40px;height:28.80px;background:#f5f5f5;border-bottom:1px solid #efefef"></div>
<div class="a" style="left:26.40px;top:393.60px;width:24.60px;height:28.80px;background:#fff;border-left:1px solid #eeeeee;border-right:1px solid #eeeeee;border-bottom:1px solid #efefef"></div>
<div class="a" style="left:6.00px;top:400.30px;width:11.00px;height:11.00px;border:1px solid #a8a8a8;border-radius:2px;background:transparent"></div>
<div class="t" style="left:26.4px;width:24.6px;text-align:center;top:400.37px;font-size:10.9px;color:#555">12</div>
<svg class="a" style="left:58.2px;top:401.10px" width="13" height="8.2" viewBox="0 0 13 8.2"><path d="M0.5 4.1 Q6.5 -2.4 12.5 4.1 Q6.5 10.6 0.5 4.1 Z" fill="none" stroke="#222" stroke-width="1"/><circle cx="6.5" cy="3.9" r="2.7" fill="#000"/><path d="M5 3.3 L6 2.4" stroke="#bbb" stroke-width="0.8"/></svg>
<svg class="a" style="left:72.6px;top:401.10px" width="13" height="8" viewBox="0 0 13 8"><polygon points="0,3 2.35,0.2 4.7,3" fill="#000"/><rect x="1.45" y="2.8" width="1.8" height="5.2" fill="#000"/><rect x="1.45" y="6.7" width="6.8" height="1.3" fill="#000"/><rect x="4.8" y="0.2" width="6.6" height="1.35" fill="#000"/><rect x="9.7" y="0.2" width="1.75" height="5" fill="#000"/><polygon points="8.3,4.8 12.9,4.8 10.6,8" fill="#000"/></svg>
<div class="t" style="left:94.4px;top:400.33px;font-size:10.95px;color:#555">Cải tạo</div>
<div class="t" style="left:792px;top:400.71px;font-size:10.5px;color:#555">Lặp lại hàng tuần vào 2, kết th...</div>
<div class="t" style="left:952px;top:400.56px;font-size:10.91px;color:#555">15/10/2020</div>
<div class="a" style="left:1040.00px;top:398.20px;width:86.00px;height:20.80px;background:#606060;border-radius:2.5px"></div>
<div class="t" style="left:1040px;width:86px;text-align:center;top:404.54px;font-size:10px;color:#fff;letter-spacing:-0.3px;-webkit-text-stroke:0.15px #fff">Chưa xử lý</div>
<svg class="a" style="left:1261px;top:399.40px" width="12" height="12" viewBox="0 0 12 12"><rect x="0.9" y="2.6" width="10.2" height="8.6" rx="1" fill="none" stroke="#555" stroke-width="1.1"/><rect x="0.9" y="2.6" width="10.2" height="2.2" fill="#444"/><rect x="2.8" y="0.8" width="1.4" height="2.8" fill="#777"/><rect x="7.8" y="0.8" width="1.4" height="2.8" fill="#777"/><path d="M6 5.8 V9.8 M4 7.8 H8" stroke="#555" stroke-width="1"/></svg>
<div class="a" style="left:0.00px;top:422.40px;width:1311.40px;height:28.80px;background:#fff;border-bottom:1px solid #efefef"></div>
<div class="a" style="left:26.40px;top:422.40px;width:24.60px;height:28.80px;background:#fff;border-left:1px solid #eeeeee;border-right:1px solid #eeeeee;border-bottom:1px solid #efefef"></div>
<div class="a" style="left:6.00px;top:429.10px;width:11.00px;height:11.00px;border:1px solid #a8a8a8;border-radius:2px;background:transparent"></div>
<div class="t" style="left:26.4px;width:24.6px;text-align:center;top:429.17px;font-size:10.9px;color:#555">13</div>
<svg class="a" style="left:58.2px;top:429.90px" width="13" height="8.2" viewBox="0 0 13 8.2"><path d="M0.5 4.1 Q6.5 -2.4 12.5 4.1 Q6.5 10.6 0.5 4.1 Z" fill="none" stroke="#222" stroke-width="1"/><circle cx="6.5" cy="3.9" r="2.7" fill="#000"/><path d="M5 3.3 L6 2.4" stroke="#bbb" stroke-width="0.8"/></svg>
<svg class="a" style="left:72.6px;top:429.90px" width="13" height="8" viewBox="0 0 13 8"><polygon points="0,3 2.35,0.2 4.7,3" fill="#000"/><rect x="1.45" y="2.8" width="1.8" height="5.2" fill="#000"/><rect x="1.45" y="6.7" width="6.8" height="1.3" fill="#000"/><rect x="4.8" y="0.2" width="6.6" height="1.35" fill="#000"/><rect x="9.7" y="0.2" width="1.75" height="5" fill="#000"/><polygon points="8.3,4.8 12.9,4.8 10.6,8" fill="#000"/></svg>
<div class="t" style="left:94.4px;top:429.13px;font-size:10.95px;color:#555">Cải tạo</div>
<div class="t" style="left:792px;top:429.51px;font-size:10.5px;color:#555">Lặp lại hàng tuần vào 2, kết th...</div>
<div class="t" style="left:952px;top:429.36px;font-size:10.91px;color:#555">26/10/2020</div>
<div class="a" style="left:1040.00px;top:427.00px;width:86.00px;height:20.80px;background:#606060;border-radius:2.5px"></div>
<div class="t" style="left:1040px;width:86px;text-align:center;top:433.34px;font-size:10px;color:#fff;letter-spacing:-0.3px;-webkit-text-stroke:0.15px #fff">Chưa xử lý</div>
<div class="a" style="left:0.00px;top:451.20px;width:1311.40px;height:25.60px;background:#fff;border-bottom:1px solid #dedede"></div>
<div class="a" style="left:7.8px;top:458.60px;width:10px;height:10px;border-radius:2px;background:#8e8e8e"></div>
<div class="a" style="left:9.80px;top:462.80px;width:6.00px;height:1.60px;background:#fff"></div>
<div class="t" style="left:27.4px;top:459.31px;font-size:10.26px;color:#707070">Tài sản: Máy phay vạn năng X63W-1</div>
<div class="a" style="left:0.00px;top:476.80px;width:1311.40px;height:28.80px;background:#f5f5f5;border-bottom:1px solid #efefef"></div>
<div class="a" style="left:26.40px;top:476.80px;width:24.60px;height:28.80px;background:#fff;border-left:1px solid #eeeeee;border-right:1px solid #eeeeee;border-bottom:1px solid #efefef"></div>
<div class="a" style="left:6.00px;top:483.50px;width:11.00px;height:11.00px;border:1px solid #a8a8a8;border-radius:2px;background:transparent"></div>
<div class="t" style="left:26.4px;width:24.6px;text-align:center;top:483.57px;font-size:10.9px;color:#555">14</div>
<svg class="a" style="left:58.2px;top:484.30px" width="13" height="8.2" viewBox="0 0 13 8.2"><path d="M0.5 4.1 Q6.5 -2.4 12.5 4.1 Q6.5 10.6 0.5 4.1 Z" fill="none" stroke="#222" stroke-width="1"/><circle cx="6.5" cy="3.9" r="2.7" fill="#000"/><path d="M5 3.3 L6 2.4" stroke="#bbb" stroke-width="0.8"/></svg>
<svg class="a" style="left:72.6px;top:484.30px" width="13" height="8" viewBox="0 0 13 8"><polygon points="0,3 2.35,0.2 4.7,3" fill="#000"/><rect x="1.45" y="2.8" width="1.8" height="5.2" fill="#000"/><rect x="1.45" y="6.7" width="6.8" height="1.3" fill="#000"/><rect x="4.8" y="0.2" width="6.6" height="1.35" fill="#000"/><rect x="9.7" y="0.2" width="1.75" height="5" fill="#000"/><polygon points="8.3,4.8 12.9,4.8 10.6,8" fill="#000"/></svg>
<div class="t" style="left:94.4px;top:483.53px;font-size:10.95px;color:#555">Sửa chữa máy</div>
<div class="t" style="left:792px;top:483.91px;font-size:10.5px;color:#555">Lặp lại hàng tháng vào các ngà...</div>
<div class="t" style="left:952px;top:483.76px;font-size:10.91px;color:#555">27/10/2020</div>
<div class="a" style="left:1040.00px;top:481.40px;width:86.00px;height:20.80px;background:#606060;border-radius:2.5px"></div>
<div class="t" style="left:1040px;width:86px;text-align:center;top:487.74px;font-size:10px;color:#fff;letter-spacing:-0.3px;-webkit-text-stroke:0.15px #fff">Chưa xử lý</div>
<svg class="a" style="left:1261px;top:482.60px" width="12" height="12" viewBox="0 0 12 12"><rect x="0.9" y="2.6" width="10.2" height="8.6" rx="1" fill="none" stroke="#555" stroke-width="1.1"/><rect x="0.9" y="2.6" width="10.2" height="2.2" fill="#444"/><rect x="2.8" y="0.8" width="1.4" height="2.8" fill="#777"/><rect x="7.8" y="0.8" width="1.4" height="2.8" fill="#777"/><path d="M6 5.8 V9.8 M4 7.8 H8" stroke="#555" stroke-width="1"/></svg>
<div class="a" style="left:0.00px;top:505.60px;width:1311.40px;height:25.60px;background:#fff;border-bottom:1px solid #dedede"></div>
<div class="a" style="left:7.8px;top:513.00px;width:10px;height:10px;border-radius:2px;background:#8e8e8e"></div>
<div class="a" style="left:9.80px;top:517.20px;width:6.00px;height:1.60px;background:#fff"></div>
<div class="t" style="left:27.4px;top:513.71px;font-size:10.26px;color:#707070">Tài sản: PU0015</div>
<div class="a" style="left:0.00px;top:531.20px;width:1311.40px;height:28.80px;background:#fff;border-bottom:1px solid #efefef"></div>
<div class="a" style="left:26.40px;top:531.20px;width:24.60px;height:28.80px;background:#fff;border-left:1px solid #eeeeee;border-right:1px solid #eeeeee;border-bottom:1px solid #efefef"></div>
<div class="a" style="left:6.00px;top:537.90px;width:11.00px;height:11.00px;border:1px solid #a8a8a8;border-radius:2px;background:transparent"></div>
<div class="t" style="left:26.4px;width:24.6px;text-align:center;top:537.97px;font-size:10.9px;color:#555">15</div>
<svg class="a" style="left:58.2px;top:538.70px" width="13" height="8.2" viewBox="0 0 13 8.2"><path d="M0.5 4.1 Q6.5 -2.4 12.5 4.1 Q6.5 10.6 0.5 4.1 Z" fill="none" stroke="#222" stroke-width="1"/><circle cx="6.5" cy="3.9" r="2.7" fill="#000"/><path d="M5 3.3 L6 2.4" stroke="#bbb" stroke-width="0.8"/></svg>
<svg class="a" style="left:72.6px;top:538.70px" width="13" height="8" viewBox="0 0 13 8"><polygon points="0,3 2.35,0.2 4.7,3" fill="#000"/><rect x="1.45" y="2.8" width="1.8" height="5.2" fill="#000"/><rect x="1.45" y="6.7" width="6.8" height="1.3" fill="#000"/><rect x="4.8" y="0.2" width="6.6" height="1.35" fill="#000"/><rect x="9.7" y="0.2" width="1.75" height="5" fill="#000"/><polygon points="8.3,4.8 12.9,4.8 10.6,8" fill="#000"/></svg>
<div class="t" style="left:94.4px;top:537.93px;font-size:10.95px;color:#555">Sửa chữa thân vỏ</div>
<div class="t" style="left:792px;top:538.31px;font-size:10.5px;color:#555">Lặp lại 3 tháng 1 lần vào các ng...</div>
<div class="t" style="left:952px;top:538.16px;font-size:10.91px;color:#555">08/10/2020</div>
<div class="a" style="left:1040.00px;top:535.80px;width:86.00px;height:20.80px;background:#606060;border-radius:2.5px"></div>
<div class="t" style="left:1040px;width:86px;text-align:center;top:542.14px;font-size:10px;color:#fff;letter-spacing:-0.3px;-webkit-text-stroke:0.15px #fff">Chưa xử lý</div>
<div class="a" style="left:0.00px;top:560.00px;width:1311.40px;height:28.80px;background:#f5f5f5;border-bottom:1px solid #efefef"></div>
<div class="a" style="left:26.40px;top:560.00px;width:24.60px;height:28.80px;background:#fff;border-left:1px solid #eeeeee;border-right:1px solid #eeeeee;border-bottom:1px solid #efefef"></div>
<div class="a" style="left:6.00px;top:566.70px;width:11.00px;height:11.00px;border:1px solid #a8a8a8;border-radius:2px;background:transparent"></div>
<div class="t" style="left:26.4px;width:24.6px;text-align:center;top:566.77px;font-size:10.9px;color:#555">16</div>
<svg class="a" style="left:58.2px;top:567.50px" width="13" height="8.2" viewBox="0 0 13 8.2"><path d="M0.5 4.1 Q6.5 -2.4 12.5 4.1 Q6.5 10.6 0.5 4.1 Z" fill="none" stroke="#222" stroke-width="1"/><circle cx="6.5" cy="3.9" r="2.7" fill="#000"/><path d="M5 3.3 L6 2.4" stroke="#bbb" stroke-width="0.8"/></svg>
<svg class="a" style="left:72.6px;top:567.50px" width="13" height="8" viewBox="0 0 13 8"><polygon points="0,3 2.35,0.2 4.7,3" fill="#000"/><rect x="1.45" y="2.8" width="1.8" height="5.2" fill="#000"/><rect x="1.45" y="6.7" width="6.8" height="1.3" fill="#000"/><rect x="4.8" y="0.2" width="6.6" height="1.35" fill="#000"/><rect x="9.7" y="0.2" width="1.75" height="5" fill="#000"/><polygon points="8.3,4.8 12.9,4.8 10.6,8" fill="#000"/></svg>
<div class="t" style="left:94.4px;top:566.73px;font-size:10.95px;color:#555">Sửa chữa thân vỏ</div>
<div class="t" style="left:792px;top:567.11px;font-size:10.5px;color:#555">Lặp lại 3 tháng 1 lần vào các ng...</div>
<div class="t" style="left:952px;top:566.96px;font-size:10.91px;color:#555">21/10/2020</div>
<div class="a" style="left:1040.00px;top:564.60px;width:86.00px;height:20.80px;background:#606060;border-radius:2.5px"></div>
<div class="t" style="left:1040px;width:86px;text-align:center;top:570.94px;font-size:10px;color:#fff;letter-spacing:-0.3px;-webkit-text-stroke:0.15px #fff">Chưa xử lý</div>
</div>
<div class="a" style="left:1515.40px;top:251.70px;width:13.60px;height:578.10px;background:#f1f1f1"></div>
<div class="a" style="left:1516.80px;top:265.30px;width:10.20px;height:353.60px;background:#c1c1c1"></div>
<svg class="a" style="left:1518px;top:257px" width="8" height="5" viewBox="0 0 8 5"><polygon points="0,5 8,5 4,0" fill="#a0a0a0"/></svg>
<svg class="a" style="left:1518px;top:819.5px" width="8" height="5" viewBox="0 0 8 5"><polygon points="0,0 8,0 4,5" fill="#505050"/></svg>
<div class="a" style="left:204.00px;top:829.30px;width:1325.00px;height:1.00px;background:#e2e2e2"></div>
<div class="a" style="left:208.30px;top:835.00px;width:105.50px;height:25.60px;background:#6614c6;border-radius:3px"></div>
<svg class="a" style="left:214px;top:841px" width="13" height="14" viewBox="0 0 13 14"><rect x="1" y="2.5" width="11" height="10.5" rx="1" fill="none" stroke="#fff" stroke-width="1.2"/><rect x="1" y="2.5" width="11" height="2" fill="#fff"/><rect x="3" y="0.6" width="1.5" height="3" fill="#fff"/><rect x="8.5" y="0.6" width="1.5" height="3" fill="#fff"/><path d="M6.5 6.5 V11 M4.3 8.8 H8.7" stroke="#fff" stroke-width="1.2"/></svg>
<div class="t" style="left:234.00px;top:843.30px;font-size:9.8px;color:#fff;font-weight:normal;">Thêm công việc</div>
<svg class="a" style="left:1144px;top:842.5px" width="11" height="11" viewBox="0 0 11 11"><path d="M5.2 0.5 L0.9 5.2 L5.2 9.9 M9.8 0.5 L5.5 5.2 L9.8 9.9" fill="none" stroke="#c8c8c8" stroke-width="1.1"/></svg>
<svg class="a" style="left:1178px;top:842.5px" width="7" height="11" viewBox="0 0 7 11"><path d="M5.6 0.5 L1 5.2 L5.6 9.9" fill="none" stroke="#c8c8c8" stroke-width="1.1"/></svg>
<div class="a" style="left:1200.60px;top:842.20px;width:1.00px;height:11.20px;background:#e3e3e3"></div>
<div class="t" style="left:1211.50px;top:843.11px;font-size:10.5px;color:#555;font-weight:normal;">Trang</div>
<div class="a" style="left:1250.50px;top:835.30px;width:39.50px;height:25.00px;border:1px solid #d9d9d9;background:#fff"></div>
<div class="t" style="left:1259.50px;top:843.61px;font-size:10.5px;color:#444;font-weight:normal;">1</div>
<div class="t" style="left:1295.50px;top:843.37px;font-size:10.2px;color:#555;font-weight:normal;">của 2</div>
<div class="a" style="left:1331.00px;top:842.20px;width:1.00px;height:11.20px;background:#e3e3e3"></div>
<svg class="a" style="left:1347.3px;top:842.5px" width="7" height="11" viewBox="0 0 7 11"><path d="M0.8 0.5 L5.6 5.2 L0.8 9.9" fill="none" stroke="#666" stroke-width="1.1"/></svg>
<svg class="a" style="left:1377.5px;top:842.5px" width="11" height="11" viewBox="0 0 11 11"><path d="M0.8 0.5 L5.2 5.2 L0.8 9.9 M5.4 0.5 L9.9 5.2 L5.4 9.9" fill="none" stroke="#666" stroke-width="1.1"/></svg>
<div class="a" style="left:1402.00px;top:842.20px;width:1.00px;height:11.20px;background:#e3e3e3"></div>
<svg class="a" style="left:1416px;top:842px" width="12" height="12" viewBox="0 0 12 12"><path d="M10.3 4.2 A4.6 4.6 0 0 0 2.2 3.6" fill="none" stroke="#666" stroke-width="1.6"/><polygon points="10.9,0.8 10.9,5.2 6.5,5.2" fill="#666"/><path d="M1.7 7.8 A4.6 4.6 0 0 0 9.8 8.4" fill="none" stroke="#666" stroke-width="1.6"/><polygon points="1.1,11.2 1.1,6.8 5.5,6.8" fill="#666"/></svg>
<div class="t" style="left:1451.80px;top:843.30px;font-size:10.28px;color:#555;font-weight:normal;">1 - 25 của 28</div>
</body></html>
